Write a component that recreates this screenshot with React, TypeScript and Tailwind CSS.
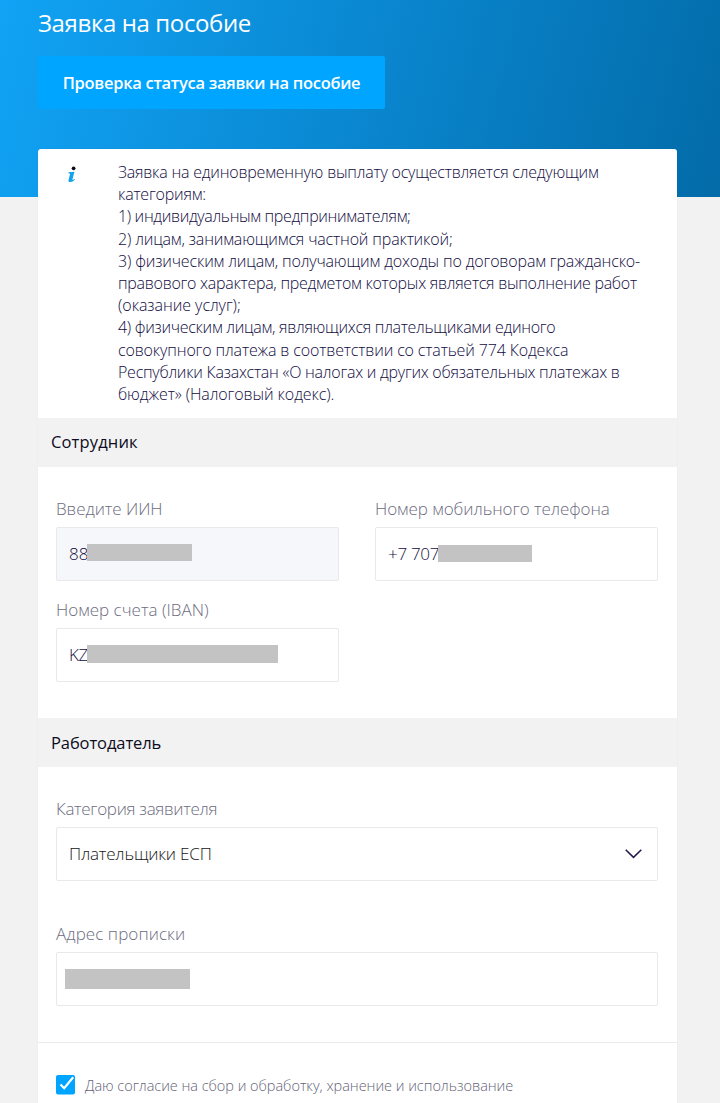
import type { ReactNode } from "react";

const infoLines = [
  { text: "Заявка на единовременную выплату осуществляется следующим", tracking: "tracking-[-0.21px]" },
  { text: "категориям:", tracking: "tracking-[-0.2px]" },
  { text: "1) индивидуальным предпринимателям;", tracking: "tracking-[-0.34px]" },
  { text: "2) лицам, занимающимся частной практикой;", tracking: "tracking-[-0.16px]" },
  { text: "3) физическим лицам, получающим доходы по договорам гражданско-", tracking: "tracking-[-0.15px]" },
  { text: "правового характера, предметом которых является выполнение работ", tracking: "tracking-[-0.27px]" },
  { text: "(оказание услуг);", tracking: "tracking-[-0.05px]" },
  { text: "4) физическим лицам, являющихся плательщиками единого", tracking: "tracking-[-0.29px]" },
  { text: "совокупного платежа в соответствии со статьей 774 Кодекса", tracking: "tracking-[-0.14px]" },
  { text: "Республики Казахстан «О налогах и других обязательных платежах в", tracking: "tracking-[-0.25px]" },
  { text: "бюджет» (Налоговый кодекс).", tracking: "tracking-[-0.09px]" },
];

function SectionTitle({ className, children }: { className: string; children: ReactNode }) {
  return (
    <h2 className={`flex h-[49px] items-center bg-[#f2f2f2] pl-[13px] text-[16.5px] font-medium text-[#0c0c22] ${className}`}>
      {children}
    </h2>
  );
}

type FieldProps = {
  label: string;
  tracking: string;
  className: string;
  children: ReactNode;
};

function Field({ label, tracking, className, children }: FieldProps) {
  return (
    <div>
      <div className={`flex h-[27px] items-start text-[17px] leading-[18px] whitespace-nowrap text-[#6c6c80] ${tracking}`}>
        {label}
      </div>
      <div className={`flex h-[54px] items-center rounded-[2px] border border-[#e9e9ec] text-[17px] whitespace-nowrap text-[#120c42] ${className}`}>
        {children}
      </div>
    </div>
  );
}

function InfoIcon() {
  return (
    <svg width="10" height="18" viewBox="0 0 10 18" className="mt-[5px] shrink-0">
      <circle cx="6.6" cy="2.3" r="1.9" fill="#0c0c18" />
      <path
        d="M1.6 6.3L7.4 5.8L5.5 13.3Q5.4 14.3 6.2 13.8L7.6 12.8L7.8 13.7Q5.5 16.2 3.3 16.1Q1 16 1.6 13.7L3 8.3Q3.1 7.5 2.5 7.4L1.3 7.3Z"
        fill="#12a2ee"
      />
    </svg>
  );
}

export default function App() {
  return (
    <div className="h-[1103px] overflow-hidden bg-[#f2f2f2] font-['Open_Sans','Noto_Sans',sans-serif] font-light">
      <header className="h-[197px] bg-[linear-gradient(105deg,#11a3f5_0%,#0a87d0_50%,#036ba8_100%)] px-[38px] pt-[6px]">
        <h1 className="h-[50px] text-[24px] leading-[33px] font-medium tracking-[-0.38px] text-white">
          Заявка на пособие
        </h1>
        <button className="flex h-[53px] w-[347px] items-center justify-center rounded-[2px] bg-[#00a5ff] pt-px text-[16.5px] font-semibold tracking-[-0.29px] text-white">
          Проверка статуса заявки на пособие
        </button>
      </header>

      <main className="relative -mt-[48px] mr-[43px] ml-[38px] h-[1000px] rounded-[3px] bg-white shadow-[0_0_2px_rgba(0,0,0,0.06)]">
        <section className="flex h-[269px] items-start pt-[12px] pl-[29px]">
          <InfoIcon />
          <div className="ml-[41px] text-[16px] leading-[22.2px] text-[#120c42]">
            {infoLines.map((line) => (
              <p key={line.text} className={`whitespace-nowrap ${line.tracking}`}>
                {line.text}
              </p>
            ))}
          </div>
        </section>

        <SectionTitle className="tracking-[0.15px]">Сотрудник</SectionTitle>
        <section className="grid h-[251px] grid-cols-[283px_283px] content-start gap-x-9 gap-y-5 pt-[33px] pl-[18px]">
          <Field label="Введите ИИН" tracking="tracking-[-0.06px]" className="bg-[#f6f7fa] pl-3">
            <span className="w-[18px]">88</span>
            <span className="mb-[3px] h-[17px] w-[105px] bg-[#c3c3c3]" />
          </Field>
          <Field label="Номер мобильного телефона" tracking="tracking-[-0.05px]" className="bg-white pl-3">
            <span className="w-[50px] tracking-[-0.3px]">+7 707</span>
            <span className="mb-px h-[17px] w-[94px] bg-[#c3c3c3]" />
          </Field>
          <Field label="Номер счета (IBAN)" tracking="tracking-[0.01px]" className="bg-white pl-3">
            <span className="w-[18px] tracking-[-0.5px]">KZ</span>
            <span className="mb-[3px] h-[18px] w-[191px] bg-[#c3c3c3]" />
          </Field>
        </section>

        <SectionTitle className="pt-px tracking-[-0.1px]">Работодатель</SectionTitle>
        <section className="flex h-[276px] flex-col gap-[44px] border-b border-[#ebebed] pt-[33px] pr-[19px] pl-[18px]">
          <Field label="Категория заявителя" tracking="tracking-[-0.32px]" className="justify-between bg-white pr-[15px] pl-3">
            <span className="tracking-[-0.2px] text-[#161616]">Плательщики ЕСП</span>
            <svg width="17" height="10" viewBox="0 0 17 10" fill="none" stroke="#1f1a4b" strokeWidth="1.5">
              <path d="M0.7 0.8L8.5 8.4L16.3 0.8" />
            </svg>
          </Field>
          <Field label="Адрес прописки" tracking="tracking-[0.07px]" className="bg-white pl-2">
            <span className="h-[20px] w-[125px] bg-[#c3c3c3]" />
          </Field>
        </section>

        <label className="flex items-start pt-[32px] pl-[18px]">
          <svg width="19" height="20" viewBox="0 0 19 20" fill="none" className="shrink-0">
            <rect width="19" height="19.5" rx="2" fill="#00a5ff" />
            <path d="M4.5 9.5L8.2 13.2L17.2 2.3" stroke="#fff" strokeWidth="2.2" />
          </svg>
          <span className="mt-px ml-[10px] text-[14.5px] leading-[20px] tracking-[-0.03px] whitespace-nowrap text-[#646478]">
            Даю согласие на сбор и обработку, хранение и использование
          </span>
        </label>
      </main>
    </div>
  );
}
